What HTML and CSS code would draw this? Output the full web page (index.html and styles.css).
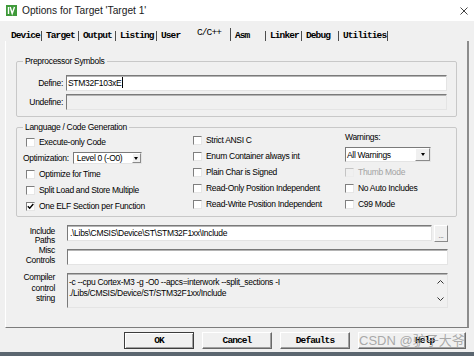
FILE: index.html
```html
<!DOCTYPE html>
<html lang="en">
<head>
    <meta charset="UTF-8">
    <meta name="viewport" content="width=device-width, initial-scale=1.0">
    <title>Options for Target 'Target 1'</title>
    <link rel="stylesheet" href="styles.css">
</head>
<body>
    <div class="titlebar">
        <svg class="app-icon" viewBox="0 0 11 11">
            <rect width="11" height="11" fill="#3f9a3a"/>
            <path d="M2.5 2v7M4.2 2l2 6.5 2.3-6.5" stroke="#fff" stroke-width="1.4" fill="none"/>
        </svg>
        <span class="title">Options for Target 'Target 1'</span>
        <svg class="close" viewBox="0 0 8 8">
            <path d="M0.5 0.5l7 7M7.5 0.5l-7 7" stroke="#444" stroke-width="1"/>
        </svg>
    </div>

    <div class="tabs">
        <div class="tab">Device</div>
        <div class="tab">Target</div>
        <div class="tab">Output</div>
        <div class="tab">Listing</div>
        <div class="tab plain">User</div>
        <div class="tab active">C/C++</div>
        <div class="tab">Asm</div>
        <div class="tab">Linker</div>
        <div class="tab">Debug</div>
        <div class="tab">Utilities</div>
    </div>

    <div class="panel">
        <fieldset class="group">
            <legend>Preprocessor Symbols</legend>
            <div class="sym-grid">
                <div class="sym-label">Define:</div>
                <div class="field">STM32F103xE<span class="caret"></span></div>
                <div class="sym-label">Undefine:</div>
                <div class="field disabled"></div>
            </div>
        </fieldset>

        <fieldset class="group group-lang">
            <legend>Language / Code Generation</legend>
            <div class="lang-cols">
                <div class="col col-a">
                    <div class="check"><span class="box"></span>Execute-only Code</div>
                    <div class="opt-row">
                        <span>Optimization:</span>
                        <div class="select sel-opt"><span>Level 0 (-O0)</span><span class="drop"><i class="tri"></i></span></div>
                    </div>
                    <div class="check"><span class="box"></span>Optimize for Time</div>
                    <div class="check"><span class="box"></span>Split Load and Store Multiple</div>
                    <div class="check"><span class="box"><svg viewBox="0 0 7 7"><path d="M0.8 3.3l1.9 2 3.6-4.3" stroke="#000" stroke-width="1.4" fill="none"/></svg></span>One ELF Section per Function</div>
                </div>
                <div class="col col-b">
                    <div class="check"><span class="box"></span>Strict ANSI C</div>
                    <div class="check"><span class="box"></span>Enum Container always int</div>
                    <div class="check"><span class="box"></span>Plain Char is Signed</div>
                    <div class="check"><span class="box"></span>Read-Only Position Independent</div>
                    <div class="check"><span class="box"></span>Read-Write Position Independent</div>
                </div>
                <div class="col col-c">
                    <div class="warn-label">Warnings:</div>
                    <div class="select sel-warn"><span>All Warnings</span><span class="drop"><i class="tri"></i></span></div>
                    <div class="warn-checks">
                        <div class="check off"><span class="box"></span>Thumb Mode</div>
                        <div class="check"><span class="box"></span>No Auto Includes</div>
                        <div class="check"><span class="box"></span>C99 Mode</div>
                    </div>
                </div>
            </div>
        </fieldset>

        <div class="paths">
            <div class="path-label lbl-include">Include<br>Paths</div>
            <div class="include-row">
                <div class="field">.\Libs\CMSIS\Device\ST\STM32F1xx\Include</div>
                <div class="browse">...</div>
            </div>
            <div class="path-label lbl-misc">Misc<br>Controls</div>
            <div class="field"></div>
            <div class="path-label lbl-compiler">Compiler<br>control<br>string</div>
            <div class="compiler">
                <div class="compiler-text">-c --cpu Cortex-M3 -g -O0 --apcs=interwork --split_sections -I<br>./Libs/CMSIS/Device/ST/STM32F1xx/Include</div>
                <div class="scroll">
                    <svg viewBox="0 0 7 4"><path d="M0.5 3.5l3-3 3 3" stroke="#333" fill="none"/></svg>
                    <svg viewBox="0 0 7 4"><path d="M0.5 0.5l3 3 3-3" stroke="#333" fill="none"/></svg>
                </div>
            </div>
        </div>
    </div>

    <div class="buttons">
        <div class="btn default">OK</div>
        <div class="btn">Cancel</div>
        <div class="btn">Defaults</div>
        <div class="btn help">Help<span class="watermark">CSDN @驴子大爷</span></div>
    </div>
    <div class="taskbar"></div>
</body>
</html>
```

FILE: styles.css
```css
body {
    margin: 0;
    width: 474px;
    height: 356px;
    overflow: hidden;
    background: #f0f0f0;
    font-family: "Liberation Sans", Arial, sans-serif;
    font-size: 8.5px;
    letter-spacing: -0.3px;
    color: #000;
}

/* title bar */
.titlebar {
    height: 21px;
    background: #fff;
    display: flex;
    align-items: center;
    padding-left: 6px;
}
.app-icon {
    width: 11px;
    height: 11px;
}
.title {
    margin-left: 5px;
    font-size: 10.2px;
    letter-spacing: 0;
    color: #1a1a1a;
}
.close {
    width: 8px;
    height: 8px;
    margin-left: auto;
    margin-right: 6px;
}

/* tab strip */
.tabs {
    display: grid;
    grid-template-columns: 35px 37px 37px 41px 31px 43px 35px 36px 37px 49px;
    align-items: end;
    height: 20px;
    padding-left: 7px;
    font: bold 9.5px "Liberation Mono", "Courier New", monospace;
    letter-spacing: -0.9px;
}
.tab {
    height: 10px;
    line-height: 10px;
    padding-left: 4px;
    box-sizing: border-box;
    border-right: 1px solid #4d4d4d;
    white-space: nowrap;
}
.tab.plain {
    border-right: none;
}
.tab.active {
    height: 13px;
    padding-left: 9px;
    font-weight: normal;
}

/* tab page */
.panel {
    margin-left: 5px;
    width: 464px;
    height: 287px;
    box-sizing: border-box;
    border-left: 1px solid #fff;
    border-right: 2px solid #8c8c8c;
    border-bottom: 1px solid #7c7c7c;
    padding: 15px 0 0 10px;
}
.group {
    width: 441px;
    min-width: 0;
    box-sizing: border-box;
    margin: 0;
    padding: 0;
    border: 1px solid #c8c8c8;
    border-radius: 2px;
}
.group legend {
    margin-left: 6px;
    padding: 0 2px;
    line-height: 10px;
}
.group-lang {
    margin-top: 5px;
}

.sym-grid {
    display: grid;
    grid-template-columns: 46px 381px;
    column-gap: 3px;
    row-gap: 3px;
    padding: 9px 0 6px;
}
.sym-label {
    text-align: right;
    align-self: center;
}

.field {
    height: 16px;
    box-sizing: border-box;
    background: #fff;
    border: 1px solid;
    border-color: #7a7a7a #e4e4e4 #e4e4e4 #7a7a7a;
    box-shadow: inset 0 1px 0 #b4b4b4;
    padding-left: 1px;
    line-height: 14px;
    white-space: nowrap;
    overflow: hidden;
}
.field.disabled {
    background: #f0f0f0;
}
.caret {
    display: inline-block;
    width: 1px;
    height: 11px;
    margin-left: 1px;
    background: #000;
    vertical-align: -2px;
}

/* language / code generation */
.lang-cols {
    display: flex;
    padding-bottom: 2px;
}
.col-a {
    width: 170px;
    margin-left: 6px;
    padding-top: 2px;
}
.col-b {
    width: 152px;
}
.col-c {
    width: 86px;
}
.check {
    display: flex;
    align-items: center;
    height: 16px;
    white-space: nowrap;
}
.col-a .check {
    padding-left: 3px;
}
.box {
    width: 9px;
    height: 9px;
    box-sizing: border-box;
    margin-right: 4px;
    background: #fff;
    border: 1px solid;
    border-color: #7f7f7f #e6e6e6 #e6e6e6 #7f7f7f;
    display: flex;
    align-items: center;
    justify-content: center;
}
.box svg {
    width: 7px;
    height: 7px;
}
.check.off {
    color: #a3a3a3;
}
.check.off .box {
    background: #f0f0f0;
    border-color: #c4c4c4 #ececec #ececec #c4c4c4;
}

.opt-row {
    display: flex;
    align-items: center;
    height: 16px;
}
.select {
    display: flex;
    align-items: center;
    box-sizing: border-box;
    background: #fff;
    border: 1px solid;
    border-color: #7a7a7a #e4e4e4 #e4e4e4 #7a7a7a;
    padding-left: 3px;
    white-space: nowrap;
}
.sel-opt {
    width: 69px;
    height: 12px;
    margin-left: 4px;
}
.sel-warn {
    width: 86px;
    height: 15px;
    margin-top: 5px;
    padding-left: 1px;
}
.drop {
    margin-left: auto;
    width: 9px;
    height: 100%;
    box-sizing: border-box;
    background: #f0f0f0;
    border: 1px solid;
    border-color: #fff #8a8a8a #8a8a8a #fff;
    display: flex;
    align-items: center;
    justify-content: center;
}
.sel-warn .drop {
    width: 15px;
}
.tri {
    width: 0;
    height: 0;
    border-left: 2.5px solid transparent;
    border-right: 2.5px solid transparent;
    border-top: 3px solid #000;
}
.warn-label {
    line-height: 10px;
}
.warn-checks {
    margin-top: 2px;
}

/* include / misc / compiler */
.paths {
    display: grid;
    grid-template-columns: 40px 381px;
    grid-template-rows: 17px 17px 35px;
    column-gap: 11px;
    row-gap: 7px;
    align-items: start;
    margin-top: 8px;
}
.path-label {
    text-align: right;
    padding-right: 1px;
    line-height: 10.5px;
}
.lbl-include {
    margin-top: 2px;
    line-height: 9px;
}
.lbl-misc {
    margin-top: -4px;
    line-height: 10px;
}
.lbl-compiler {
    margin-top: -1px;
}
.include-row {
    display: flex;
    gap: 2px;
}
.include-row .field {
    flex: 1;
    padding-left: 2px;
}
.browse {
    width: 14px;
    height: 17px;
    box-sizing: border-box;
    border: 1px solid;
    border-color: #fff #8a8a8a #8a8a8a #fff;
    font-size: 7px;
    line-height: 20px;
    text-align: center;
    color: #555;
}
.compiler {
    height: 35px;
    box-sizing: border-box;
    display: flex;
    background: #f0f0f0;
    border: 1px solid;
    border-color: #7a7a7a #e4e4e4 #e4e4e4 #7a7a7a;
    box-shadow: inset 0 1px 0 #b4b4b4;
    line-height: 11px;
}
.compiler-text {
    flex: 1;
    padding: 3px 0 0 1px;
    white-space: nowrap;
}
.scroll {
    width: 14px;
    display: flex;
    flex-direction: column;
    justify-content: space-between;
    align-items: center;
    padding: 6px 0 6px;
}
.scroll svg {
    width: 7px;
    height: 4px;
}

/* dialog buttons */
.buttons {
    display: flex;
    gap: 8px;
    margin-top: 4px;
    padding-left: 124px;
    font: bold 9.5px "Liberation Mono", "Courier New", monospace;
    letter-spacing: -0.9px;
}
.btn {
    width: 70px;
    height: 17px;
    box-sizing: border-box;
    border: 1px solid;
    border-color: #fff #696969 #696969 #fff;
    box-shadow: inset -1px -1px 0 #a0a0a0;
    display: flex;
    align-items: center;
    justify-content: center;
}
.btn.default {
    border-color: #3c3c3c;
    box-shadow: inset 1px 1px 0 #fff, inset -1px -1px 0 #a0a0a0;
}
.btn.help {
    position: relative;
    width: 108px;
    justify-content: flex-start;
    padding-left: 56px;
}
.watermark {
    position: absolute;
    left: 0;
    top: 0;
    font: 13px "Liberation Sans", "Noto Sans CJK SC", sans-serif;
    letter-spacing: 0;
    line-height: 15px;
    color: rgba(150, 150, 150, 0.8);
    white-space: nowrap;
}
.taskbar {
    height: 4px;
    margin-top: 3px;
    background: #5b6670;
}
```
